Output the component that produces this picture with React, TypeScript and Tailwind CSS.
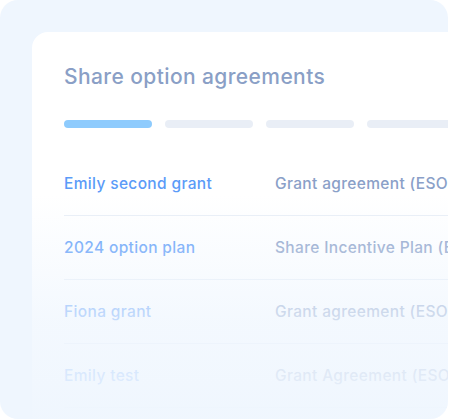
export default function App() {
  const rows = [
    { a: "Emily second grant", b: "Grant agreement (ESOP)" },
    { a: "2024 option plan", b: "Share Incentive Plan (EMI)" },
    { a: "Fiona grant", b: "Grant agreement (ESOP)" },
    { a: "Emily test", b: "Grant Agreement (ESOP)" },
  ];
  return (
    <div className="w-[450px] h-[420px] bg-white" style={{ fontFamily: "Inter, 'Noto Sans', sans-serif" }}>
      <div className="relative w-[448px] h-[419px] rounded-[18px] bg-[#eff6fe] overflow-hidden pl-8 pt-8 flex">
        <div className="relative flex-1 min-w-[460px] bg-white rounded-tl-[16px] pl-8 pt-[31px]">
          <div className="text-[21px] leading-[28px] font-medium text-[#8a9fc6] tracking-[0.4px]">Share option agreements</div>
          <div className="flex gap-[13px] mt-[29px]">
            <div className="w-[88px] h-[8px] rounded-full bg-[#8ecbfd]" />
            <div className="w-[88px] h-[8px] rounded-full bg-[#e9eef6]" />
            <div className="w-[88px] h-[8px] rounded-full bg-[#e9eef6]" />
            <div className="w-[88px] h-[8px] rounded-full bg-[#e9eef6]" />
          </div>
          <div className="mt-[24px]">
            {rows.map((r, i) => (
              <div key={i} className="flex items-center h-[64px] border-b border-[#e8eef6] text-[15.5px] font-medium tracking-[0.35px] whitespace-nowrap">
                <div className="w-[211px] text-[#5b9bf8]">{r.a}</div>
                <div className="text-[#8aa0c8]">{r.b}</div>
              </div>
            ))}
          </div>
          <div
            className="absolute inset-0 pointer-events-none"
            style={{ background: "linear-gradient(to bottom, rgba(239,246,254,0) 42%, rgba(239,246,254,0.72) 75%, rgba(239,246,254,0.97) 100%)" }}
          />
        </div>
      </div>
    </div>
  );
}
